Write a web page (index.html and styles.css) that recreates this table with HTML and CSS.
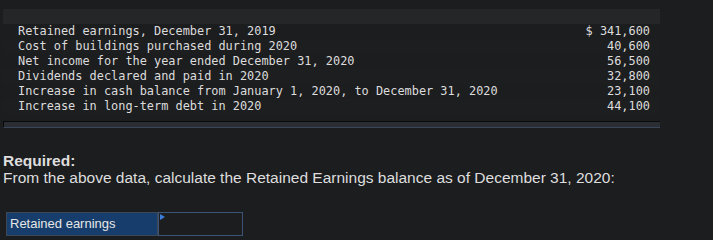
FILE: index.html
```html
<!DOCTYPE html>
<html>
<head>
<meta charset="utf-8">
<link rel="stylesheet" href="styles.css">
</head>
<body>
<div class="page">
  <div class="data">
    <div class="data-head"></div>
    <div class="rows">
      <div class="row"><span>Retained earnings, December 31, 2019</span><span>$ 341,600</span></div>
      <div class="row"><span>Cost of buildings purchased during 2020</span><span>40,600</span></div>
      <div class="row"><span>Net income for the year ended December 31, 2020</span><span>56,500</span></div>
      <div class="row"><span>Dividends declared and paid in 2020</span><span>32,800</span></div>
      <div class="row"><span>Increase in cash balance from January 1, 2020, to December 31, 2020</span><span>23,100</span></div>
      <div class="row"><span>Increase in long-term debt in 2020</span><span>44,100</span></div>
    </div>
    <div class="data-foot"></div>
  </div>
  <div class="question">
    <p class="req">Required:</p>
    <p class="text">From the above data, calculate the Retained Earnings balance as of December 31, 2020:</p>
  </div>
  <div class="answer">
    <div class="label">Retained earnings</div>
    <div class="input"><span class="flag"></span></div>
  </div>
</div>
</body>
</html>
```
FILE: styles.css
```css
html, body {
  margin: 0;
  padding: 0;
  background: #1c1d1f;
}
.page {
  padding: 9px 3px 0 3px;
  width: 657px;
}
.data {
  display: flex;
  flex-direction: column;
}
.data-head {
  height: 15px;
  background: #252628;
}
.rows {
  padding-bottom: 7px;
}
.row {
  display: flex;
  justify-content: space-between;
  height: 15px;
  padding: 0 10px 0 15px;
  font-family: "DejaVu Sans Mono", monospace;
  font-size: 11.9px;
  line-height: 15px;
  color: #dcdcdc;
  white-space: pre;
}
.row:nth-child(even) {
  background: #1d1e20;
}
.data-foot {
  height: 5px;
  border-top: 1px solid #08090a;
  border-left: 1px solid #08090a;
  border-bottom: 1px solid #3a475a;
  background: #2a2d32;
}
.question {
  margin-top: 24px;
  font-family: "Liberation Sans", Arial, sans-serif;
  color: #dedede;
  font-size: 15.5px;
  line-height: 17px;
}
.question p {
  margin: 0;
}
.req {
  font-weight: bold;
}
.answer {
  display: flex;
  margin-top: 26px;
  margin-left: 3px;
  height: 24px;
  font-family: "Liberation Sans", Arial, sans-serif;
}
.label {
  width: 152px;
  box-sizing: border-box;
  border: 1px solid #3d4856;
  background: #173d6c;
  color: #e6e6e6;
  font-size: 13px;
  line-height: 22px;
  padding-left: 3px;
}
.input {
  position: relative;
  width: 85px;
  box-sizing: border-box;
  border: 1.5px solid #3b5475;
  background: #1c1d1f;
}
.flag {
  position: absolute;
  left: 1px;
  top: 1px;
  width: 0;
  height: 0;
  border-top: 3px solid transparent;
  border-bottom: 3px solid transparent;
  border-left: 5px solid #3b7dd8;
}
```
